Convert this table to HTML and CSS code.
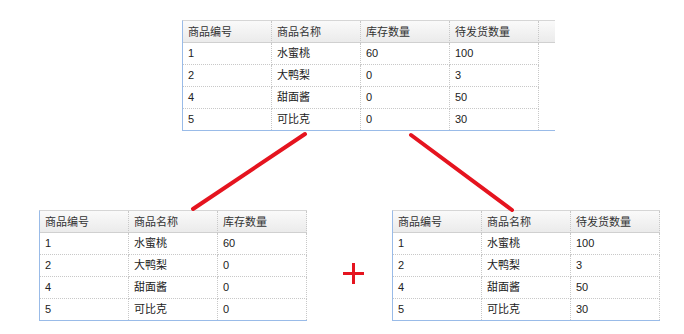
FILE: index.html
```
<!doctype html>
<html lang="zh-CN">
  <head>
    <meta charset="UTF-8" />
    <meta name="viewport" content="width=device-width, initial-scale=1.0" />
    <title>表拆分</title>
    <link rel="stylesheet" href="styles.css">
  </head>

  <body>
    <div class="diagram">
      <div class="top-row">
        <div class="grid">
          <div class="grid-row grid-head">
            <div class="cell">商品编号</div>
            <div class="cell">商品名称</div>
            <div class="cell">库存数量</div>
            <div class="cell">待发货数量</div>
            <div class="cell cell-filler"></div>
          </div>
          <div class="grid-row">
            <div class="cell">1</div><div class="cell">水蜜桃</div><div class="cell">60</div><div class="cell">100</div>
          </div>
          <div class="grid-row">
            <div class="cell">2</div><div class="cell">大鸭梨</div><div class="cell">0</div><div class="cell">3</div>
          </div>
          <div class="grid-row">
            <div class="cell">4</div><div class="cell">甜面酱</div><div class="cell">0</div><div class="cell">50</div>
          </div>
          <div class="grid-row">
            <div class="cell">5</div><div class="cell">可比克</div><div class="cell">0</div><div class="cell">30</div>
          </div>
        </div>
      </div>

      <div class="bottom-row">
        <div class="grid">
          <div class="grid-row grid-head">
            <div class="cell">商品编号</div>
            <div class="cell">商品名称</div>
            <div class="cell">库存数量</div>
          </div>
          <div class="grid-row">
            <div class="cell">1</div><div class="cell">水蜜桃</div><div class="cell">60</div>
          </div>
          <div class="grid-row">
            <div class="cell">2</div><div class="cell">大鸭梨</div><div class="cell">0</div>
          </div>
          <div class="grid-row">
            <div class="cell">4</div><div class="cell">甜面酱</div><div class="cell">0</div>
          </div>
          <div class="grid-row">
            <div class="cell">5</div><div class="cell">可比克</div><div class="cell">0</div>
          </div>
        </div>

        <div class="plus">
          <svg width="21" height="21" viewBox="0 0 21 21">
            <rect x="0" y="9" width="21" height="3" fill="#e5141f" />
            <rect x="9" y="0" width="3" height="21" fill="#e5141f" />
          </svg>
        </div>

        <div class="grid">
          <div class="grid-row grid-head">
            <div class="cell">商品编号</div>
            <div class="cell">商品名称</div>
            <div class="cell">待发货数量</div>
          </div>
          <div class="grid-row">
            <div class="cell">1</div><div class="cell">水蜜桃</div><div class="cell">100</div>
          </div>
          <div class="grid-row">
            <div class="cell">2</div><div class="cell">大鸭梨</div><div class="cell">3</div>
          </div>
          <div class="grid-row">
            <div class="cell">4</div><div class="cell">甜面酱</div><div class="cell">50</div>
          </div>
          <div class="grid-row">
            <div class="cell">5</div><div class="cell">可比克</div><div class="cell">30</div>
          </div>
        </div>
      </div>

      <!-- connectors from the source table to the two split tables -->
      <svg class="links" width="684" height="334" viewBox="0 0 684 334">
        <line x1="305" y1="134" x2="193" y2="209" />
        <line x1="411" y1="135" x2="512" y2="210" />
      </svg>
    </div>
  </body>
</html>
```

FILE: styles.css
```
html,
body {
  margin: 0;
  padding: 0;
  background: #fff;
}

body {
  font-family: "Liberation Sans", "Noto Sans CJK SC", sans-serif;
  font-size: 11px;
  color: #222;
}

.diagram {
  position: relative;
  width: 684px;
  height: 334px;
  overflow: hidden;
}

.top-row {
  padding: 20px 0 0 182px;
}

.bottom-row {
  display: flex;
  align-items: flex-start;
  margin-top: 79px;
  padding-left: 39px;
}

.grid {
  display: inline-flex;
  flex-direction: column;
  border-left: 1px solid #99bbe8;
  border-bottom: 1px solid #99bbe8;
  border-top: 1px solid #d6d6d6;
}

.grid-row {
  display: flex;
}

.cell {
  box-sizing: border-box;
  width: 89px;
  height: 22px;
  line-height: 21px;
  padding-left: 5px;
  border-right: 1px dotted #c8c8c8;
  border-bottom: 1px dotted #c8c8c8;
  white-space: nowrap;
}

.grid-head .cell {
  height: 22px;
  line-height: 22px;
  border-bottom: 1px solid #d0d0d0;
  background: linear-gradient(#fafafa, #ebebeb);
  color: #333;
}

.grid-row:last-child .cell {
  border-bottom: none;
  height: 21px;
}

.grid-head .cell-filler {
  width: 16px;
  padding: 0;
  border-right: none;
}

.plus {
  width: 85px;
  height: 112px;
  display: flex;
  align-items: center;
  justify-content: center;
  padding-left: 7px;
  box-sizing: border-box;
  padding-top: 14px;
}

.plus svg {
  display: block;
}

.links {
  position: absolute;
  top: 0;
  left: 0;
  pointer-events: none;
}

.links line {
  stroke: #e5141f;
  stroke-width: 4;
  stroke-linecap: round;
}
```
